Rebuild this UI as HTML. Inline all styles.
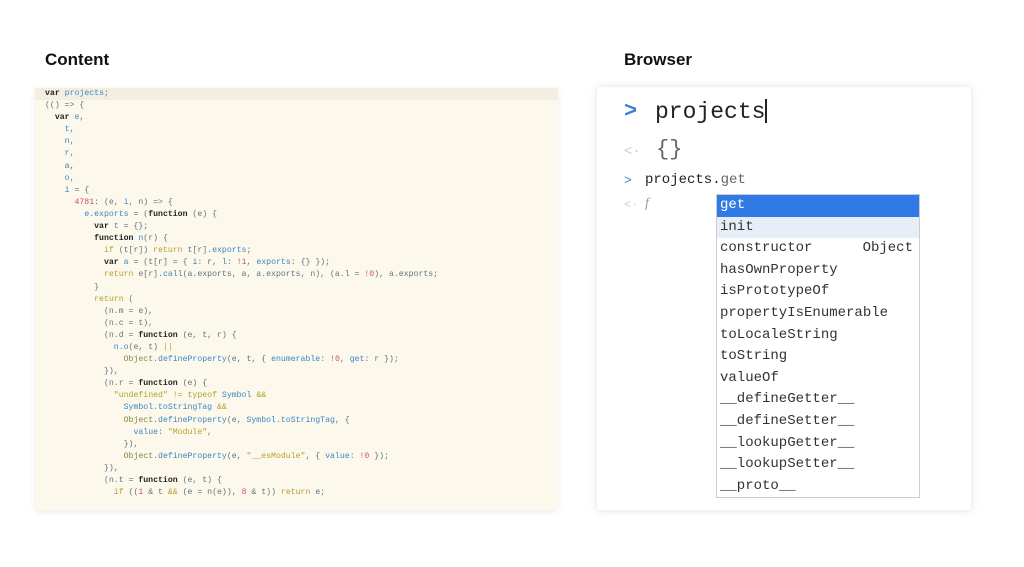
<!DOCTYPE html>
<html><head><meta charset="utf-8"><style>
body{margin:0;width:1024px;height:567px;background:#fff;position:relative;overflow:hidden;font-family:"Liberation Sans",sans-serif}
h2{position:absolute;margin:0;font-size:17px;font-weight:bold;color:#111;top:50px}
.code{position:absolute;left:35px;top:87px;width:523px;height:423px;background:#fcf8ec;box-shadow:0 2px 6px rgba(0,0,0,.08)}
.hl{position:absolute;left:0;top:1px;width:523px;height:12px;background:#f2eee2}
pre{position:absolute;left:45px;top:88px;margin:0;font-family:"Liberation Mono",monospace;font-size:8.2px;line-height:12.1px;color:#5f7680}
.k{color:#222;font-weight:bold}.b{color:#3a86c4}.r{color:#d0506a}.y{color:#b5a02a}.g{color:#7f8a3a}
.br{position:absolute;left:597px;top:87px;width:374px;height:423px;background:#fff;box-shadow:0 0 8px rgba(0,0,0,.12)}
.m{font-family:"Liberation Mono",monospace;position:absolute;color:#333}
.dd{position:absolute;left:716px;top:194px;width:202px;height:302px;border:1px solid #ccc;background:#fff;font-family:"Liberation Mono",monospace;font-size:14px;color:#333}
.dd div{height:21.6px;line-height:21.6px;padding-left:3px;position:relative}
</style></head><body>
<h2 style="left:45px">Content</h2>
<h2 style="left:624px">Browser</h2>
<div class="code"><div class="hl"></div></div>
<pre><span class="k">var</span> <span class="b">projects</span>;
(() =&gt; {
  <span class="k">var</span> <span class="b">e</span>,
    <span class="b">t</span>,
    <span class="b">n</span>,
    <span class="b">r</span>,
    <span class="b">a</span>,
    <span class="b">o</span>,
    <span class="b">i</span> = {
      <span class="r">4781</span>: (e, <span class="b">i</span>, n) =&gt; {
        <span class="b">e.exports</span> = (<span class="k">function</span> (e) {
          <span class="k">var</span> <span class="b">t</span> = {};
          <span class="k">function</span> <span class="b">n</span>(r) {
            <span class="y">if</span> (t[r]) <span class="y">return</span> t[r].<span class="b">exports</span>;
            <span class="k">var</span> <span class="b">a</span> = (t[r] = { <span class="b">i</span>: r, <span class="b">l</span>: <span class="r">!1</span>, <span class="b">exports</span>: {} });
            <span class="y">return</span> e[r].<span class="b">call</span>(a.exports, a, a.exports, n), (a.l = <span class="r">!0</span>), a.exports;
          }
          <span class="y">return</span> (
            (n.m = e),
            (n.c = t),
            (n.d = <span class="k">function</span> (e, t, r) {
              <span class="b">n.o</span>(e, t) <span class="y">||</span>
                <span class="g">Object</span>.<span class="b">defineProperty</span>(e, t, { <span class="b">enumerable</span>: <span class="r">!0</span>, <span class="b">get</span>: r });
            }),
            (n.r = <span class="k">function</span> (e) {
              <span class="y">"undefined" != typeof</span> <span class="b">Symbol</span> <span class="y">&amp;&amp;</span>
                <span class="b">Symbol.toStringTag</span> <span class="y">&amp;&amp;</span>
                <span class="g">Object</span>.<span class="b">defineProperty</span>(e, <span class="b">Symbol.toStringTag</span>, {
                  <span class="b">value</span>: <span class="y">"Module"</span>,
                }),
                <span class="g">Object</span>.<span class="b">defineProperty</span>(e, <span class="y">"__esModule"</span>, { <span class="b">value</span>: <span class="r">!0</span> });
            }),
            (n.t = <span class="k">function</span> (e, t) {
              <span class="y">if</span> ((<span class="r">1</span> &amp; t <span class="y">&amp;&amp;</span> (e = n(e)), <span class="r">8</span> &amp; t)) <span class="y">return</span> e;</pre>
<div class="br"></div>
<div class="m" style="left:624px;top:99px;font-size:22px;color:#3b82d6;font-weight:bold">&gt;</div>
<div class="m" style="left:655px;top:99px;font-size:23px;color:#222">projects<span style="display:inline-block;width:2px;height:24px;background:#222;vertical-align:-5px"></span></div>
<div class="m" style="left:624px;top:144px;font-size:14px;color:#ccc">&lt;·</div>
<div class="m" style="left:656px;top:137px;font-size:22px;color:#666">{}</div>
<div class="m" style="left:624px;top:173px;font-size:13px;color:#3b82d6">&gt;</div>
<div class="m" style="left:645px;top:172px;font-size:14px;color:#222">projects.<span style="color:#666">get</span></div>
<div class="m" style="left:624px;top:198px;font-size:12px;color:#ccc">&lt;·</div>
<div class="m" style="left:645px;top:196px;font-size:14px;color:#999;font-style:italic;font-family:'Liberation Serif',serif">f</div>
<div class="dd">
<div style="background:#2f7ae5;color:#fff">get</div>
<div style="background:#e8eef8">init</div>
<div>constructor<span style="position:absolute;right:6px">Object</span></div>
<div>hasOwnProperty</div>
<div>isPrototypeOf</div>
<div>propertyIsEnumerable</div>
<div>toLocaleString</div>
<div>toString</div>
<div>valueOf</div>
<div>__defineGetter__</div>
<div>__defineSetter__</div>
<div>__lookupGetter__</div>
<div>__lookupSetter__</div>
<div>__proto__</div>
</div>
</body></html>
